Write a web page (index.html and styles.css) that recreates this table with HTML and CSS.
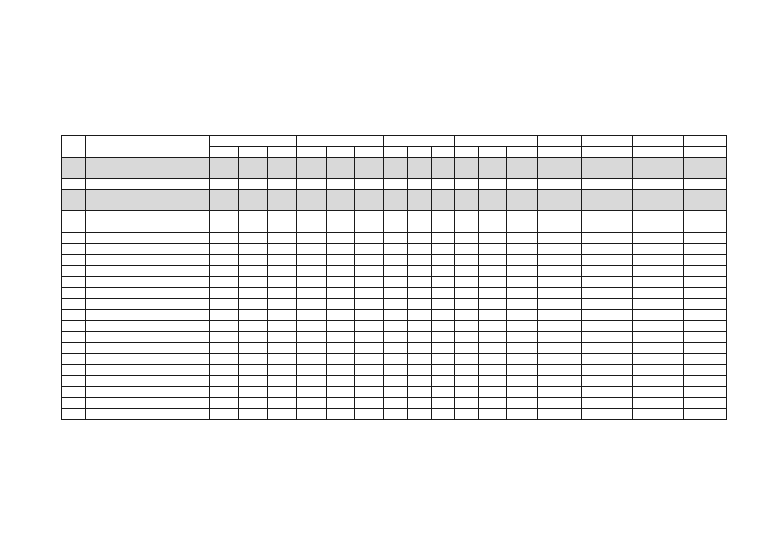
FILE: index.html
```html
<!DOCTYPE html>
<html>
<head>
<meta charset="utf-8">
<link rel="stylesheet" href="styles.css">
</head>
<body>
<table class="sheet">
<colgroup>
<col class="c24"><col class="c124"><col class="c29"><col class="c29"><col class="c29"><col class="c30"><col class="c28"><col class="c29"><col class="c24"><col class="c24"><col class="c23"><col class="c24"><col class="c28"><col class="c31"><col class="c44"><col class="c51"><col class="c51"><col class="c43">
</colgroup>
<tr class="h11"><td rowspan="2"></td><td rowspan="2"></td><td colspan="3"></td><td colspan="3"></td><td colspan="3"></td><td colspan="3"></td><td></td><td></td><td></td><td></td></tr>
<tr class="h11"><td></td><td></td><td></td><td></td><td></td><td></td><td></td><td></td><td></td><td></td><td></td><td></td><td></td><td></td><td></td><td></td></tr>
<tr class="h21 gray"><td></td><td></td><td></td><td></td><td></td><td></td><td></td><td></td><td></td><td></td><td></td><td></td><td></td><td></td><td></td><td></td><td></td><td></td></tr>
<tr class="h11"><td></td><td></td><td></td><td></td><td></td><td></td><td></td><td></td><td></td><td></td><td></td><td></td><td></td><td></td><td></td><td></td><td></td><td></td></tr>
<tr class="h21 gray"><td></td><td></td><td></td><td></td><td></td><td></td><td></td><td></td><td></td><td></td><td></td><td></td><td></td><td></td><td></td><td></td><td></td><td></td></tr>
<tr class="h22"><td></td><td></td><td></td><td></td><td></td><td></td><td></td><td></td><td></td><td></td><td></td><td></td><td></td><td></td><td></td><td></td><td></td><td></td></tr>
<tr class="h11"><td></td><td></td><td></td><td></td><td></td><td></td><td></td><td></td><td></td><td></td><td></td><td></td><td></td><td></td><td></td><td></td><td></td><td></td></tr>
<tr class="h11"><td></td><td></td><td></td><td></td><td></td><td></td><td></td><td></td><td></td><td></td><td></td><td></td><td></td><td></td><td></td><td></td><td></td><td></td></tr>
<tr class="h11"><td></td><td></td><td></td><td></td><td></td><td></td><td></td><td></td><td></td><td></td><td></td><td></td><td></td><td></td><td></td><td></td><td></td><td></td></tr>
<tr class="h11"><td></td><td></td><td></td><td></td><td></td><td></td><td></td><td></td><td></td><td></td><td></td><td></td><td></td><td></td><td></td><td></td><td></td><td></td></tr>
<tr class="h11"><td></td><td></td><td></td><td></td><td></td><td></td><td></td><td></td><td></td><td></td><td></td><td></td><td></td><td></td><td></td><td></td><td></td><td></td></tr>
<tr class="h11"><td></td><td></td><td></td><td></td><td></td><td></td><td></td><td></td><td></td><td></td><td></td><td></td><td></td><td></td><td></td><td></td><td></td><td></td></tr>
<tr class="h11"><td></td><td></td><td></td><td></td><td></td><td></td><td></td><td></td><td></td><td></td><td></td><td></td><td></td><td></td><td></td><td></td><td></td><td></td></tr>
<tr class="h11"><td></td><td></td><td></td><td></td><td></td><td></td><td></td><td></td><td></td><td></td><td></td><td></td><td></td><td></td><td></td><td></td><td></td><td></td></tr>
<tr class="h11"><td></td><td></td><td></td><td></td><td></td><td></td><td></td><td></td><td></td><td></td><td></td><td></td><td></td><td></td><td></td><td></td><td></td><td></td></tr>
<tr class="h11"><td></td><td></td><td></td><td></td><td></td><td></td><td></td><td></td><td></td><td></td><td></td><td></td><td></td><td></td><td></td><td></td><td></td><td></td></tr>
<tr class="h11"><td></td><td></td><td></td><td></td><td></td><td></td><td></td><td></td><td></td><td></td><td></td><td></td><td></td><td></td><td></td><td></td><td></td><td></td></tr>
<tr class="h11"><td></td><td></td><td></td><td></td><td></td><td></td><td></td><td></td><td></td><td></td><td></td><td></td><td></td><td></td><td></td><td></td><td></td><td></td></tr>
<tr class="h11"><td></td><td></td><td></td><td></td><td></td><td></td><td></td><td></td><td></td><td></td><td></td><td></td><td></td><td></td><td></td><td></td><td></td><td></td></tr>
<tr class="h11"><td></td><td></td><td></td><td></td><td></td><td></td><td></td><td></td><td></td><td></td><td></td><td></td><td></td><td></td><td></td><td></td><td></td><td></td></tr>
<tr class="h11"><td></td><td></td><td></td><td></td><td></td><td></td><td></td><td></td><td></td><td></td><td></td><td></td><td></td><td></td><td></td><td></td><td></td><td></td></tr>
<tr class="h11"><td></td><td></td><td></td><td></td><td></td><td></td><td></td><td></td><td></td><td></td><td></td><td></td><td></td><td></td><td></td><td></td><td></td><td></td></tr>
<tr class="h11"><td></td><td></td><td></td><td></td><td></td><td></td><td></td><td></td><td></td><td></td><td></td><td></td><td></td><td></td><td></td><td></td><td></td><td></td></tr>
</table>
</body>
</html>
```
FILE: styles.css
```css
html, body {
  margin: 0;
  padding: 0;
  background: #ffffff;
  font-family: "Liberation Sans", Arial, sans-serif;
}
.sheet {
  border-collapse: collapse;
  table-layout: fixed;
  width: 666px;
  margin: 135px 0 0 61px;
}
.sheet td {
  border: 1px solid #1a1a1a;
  padding: 0;
  font-size: 0;
  line-height: 0;
}
.h11 { height: 11px; }
.h21 { height: 21px; }
.h22 { height: 22px; }
.gray td { background: #d9d9d9; }
.c23 { width: 23px; }
.c24 { width: 24px; }
.c28 { width: 28px; }
.c29 { width: 29px; }
.c30 { width: 30px; }
.c31 { width: 31px; }
.c43 { width: 43px; }
.c44 { width: 44px; }
.c51 { width: 51px; }
.c124 { width: 124px; }
```
